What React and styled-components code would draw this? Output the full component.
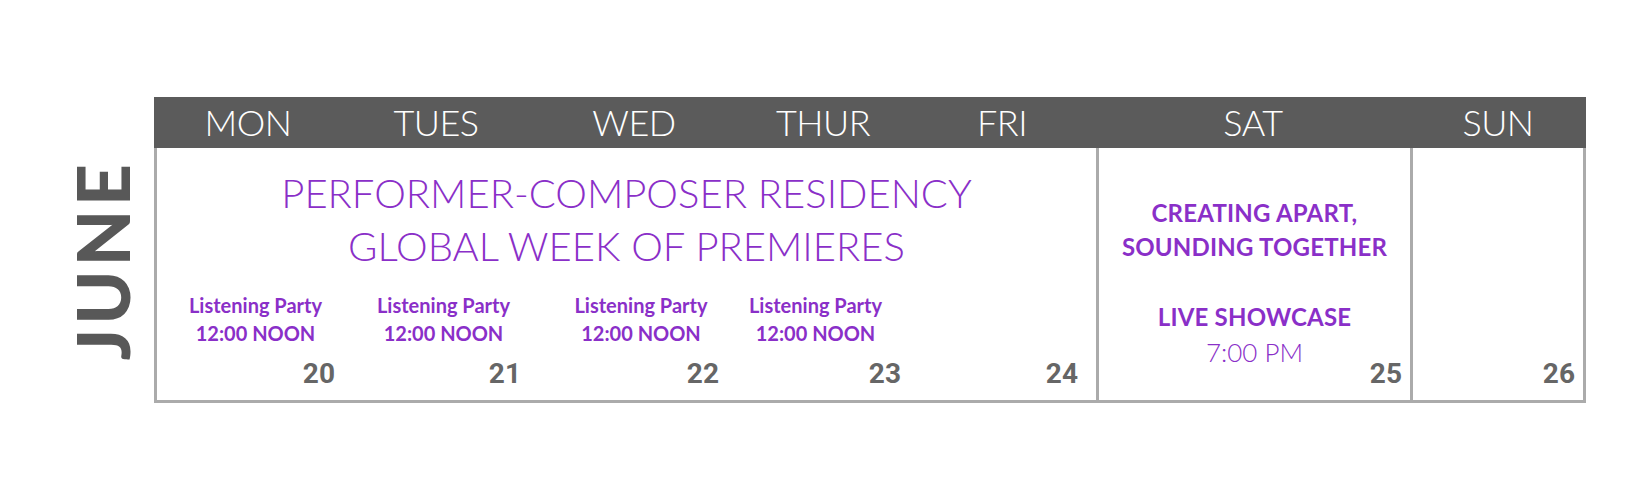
import React from 'react'
import styled, { createGlobalStyle } from 'styled-components';

const GlobalStyle = createGlobalStyle`
    body {
        margin: 0;
        background: #ffffff;
        font-family: "Lato", "Liberation Sans", sans-serif;
    }
`;

const purple = '#8a2fc8';

const Page = styled.div`
    display: flex;
    padding-top: 97px;
    width: 1650px;
    height: 500px;
    box-sizing: border-box;
`;

const MonthColumn = styled.div`
    width: 154px;
    height: 306px;
    display: flex;
    align-items: center;
    justify-content: center;
    padding: 20px 0 0 51px;
    box-sizing: border-box;
`;

const Month = styled.div`
    writing-mode: vertical-rl;
    transform: rotate(180deg);
    font-family: "Lato", sans-serif;
    font-weight: 900;
    font-size: 73px;
    line-height: 1;
    letter-spacing: 4px;
    color: #585858;
`;

const Table = styled.div`
    width: 1432px;
    display: flex;
    flex-direction: column;
`;

const HeaderRow = styled.div`
    display: grid;
    grid-template-columns: 188px 188px 208px 170px 188px 314px 176px;
    height: 51px;
    background-color: #5b5b5b;
`;

const DayName = styled.div`
    color: #ffffff;
    font-family: "Lato", sans-serif;
    font-weight: 300;
    font-size: 36px;
    line-height: 51px;
    letter-spacing: -0.5px;
    text-align: center;
    white-space: nowrap;
`;

const Body = styled.div`
    display: grid;
    grid-template-columns: 939px 314px 173px;
    height: 255px;
    border: 3px solid #ababab;
    border-top: none;
    box-sizing: border-box;
`;

const Cell = styled.div`
    display: flex;
    flex-direction: column;
    padding-bottom: 16px;
    box-sizing: border-box;
    border-left: ${p => (p.$divided ? '3px solid #ababab' : 'none')};
`;

const WeekCell = styled(Cell)`
    padding-top: 19px;
`;

const Title = styled.div`
    text-align: center;
    color: ${purple};
    font-family: "Lato", sans-serif;
    font-weight: 300;
    font-size: 40px;
    line-height: 53px;
    white-space: nowrap;
`;

const EventsRow = styled.div`
    display: flex;
    margin-top: 18px;
`;

const Event = styled.div`
    width: 150px;
    flex: none;
    margin-left: ${p => p.$left}px;
    text-align: center;
    color: ${purple};
    font-family: "Lato", sans-serif;
    font-weight: 700;
    font-size: 20px;
    line-height: 28px;
    white-space: nowrap;
`;

const DatesRow = styled.div`
    display: grid;
    grid-template-columns: 178px 186px 198px 182px 177px;
    margin-top: auto;
`;

const DateNum = styled.div`
    text-align: right;
    padding-right: ${p => p.$pad || 0}px;
    font-family: "Roboto", sans-serif;
    font-weight: 700;
    font-size: 28px;
    line-height: 20px;
    color: #666666;
`;

const SatCell = styled(Cell)`
    align-items: center;
    text-align: center;
    padding-top: 48px;
`;

const Feature = styled.div`
    margin-top: ${p => p.$top || 0}px;
    color: ${purple};
    font-family: "Lato", sans-serif;
    font-weight: 700;
    font-size: 24px;
    line-height: 34px;
    letter-spacing: 0.2px;
    white-space: nowrap;
`;

const Time = styled.div`
    margin-top: 6px;
    color: ${purple};
    font-family: "Lato", sans-serif;
    font-weight: 300;
    font-size: 26px;
    line-height: 24px;
`;

const CornerDate = styled(DateNum)`
    align-self: stretch;
    margin-top: auto;
`;

const days = ['MON', 'TUES', 'WED', 'THUR', 'FRI', 'SAT', 'SUN'];

const parties = [23.5, 38, 47.5, 24.5];

const App = () => {
  return (
    <>
      <GlobalStyle />
      <Page>
        <MonthColumn>
          <Month>JUNE</Month>
        </MonthColumn>
        <Table>
          <HeaderRow>
            {days.map(d => <DayName key={d}>{d}</DayName>)}
          </HeaderRow>
          <Body>
            <WeekCell>
              <Title>
                PERFORMER-COMPOSER RESIDENCY<br />
                GLOBAL WEEK OF PREMIERES
              </Title>
              <EventsRow>
                {parties.map((left, i) => (
                  <Event key={i} $left={left}>
                    Listening Party<br />12:00 NOON
                  </Event>
                ))}
              </EventsRow>
              <DatesRow>
                {[20, 21, 22, 23, 24].map(n => <DateNum key={n}>{n}</DateNum>)}
              </DatesRow>
            </WeekCell>
            <SatCell $divided>
              <Feature>CREATING APART,<br />SOUNDING TOGETHER</Feature>
              <Feature $top={36}>LIVE SHOWCASE</Feature>
              <Time>7:00 PM</Time>
              <CornerDate $pad={8}>25</CornerDate>
            </SatCell>
            <Cell $divided>
              <CornerDate $pad={8}>26</CornerDate>
            </Cell>
          </Body>
        </Table>
      </Page>
    </>
  )
}

export default App
